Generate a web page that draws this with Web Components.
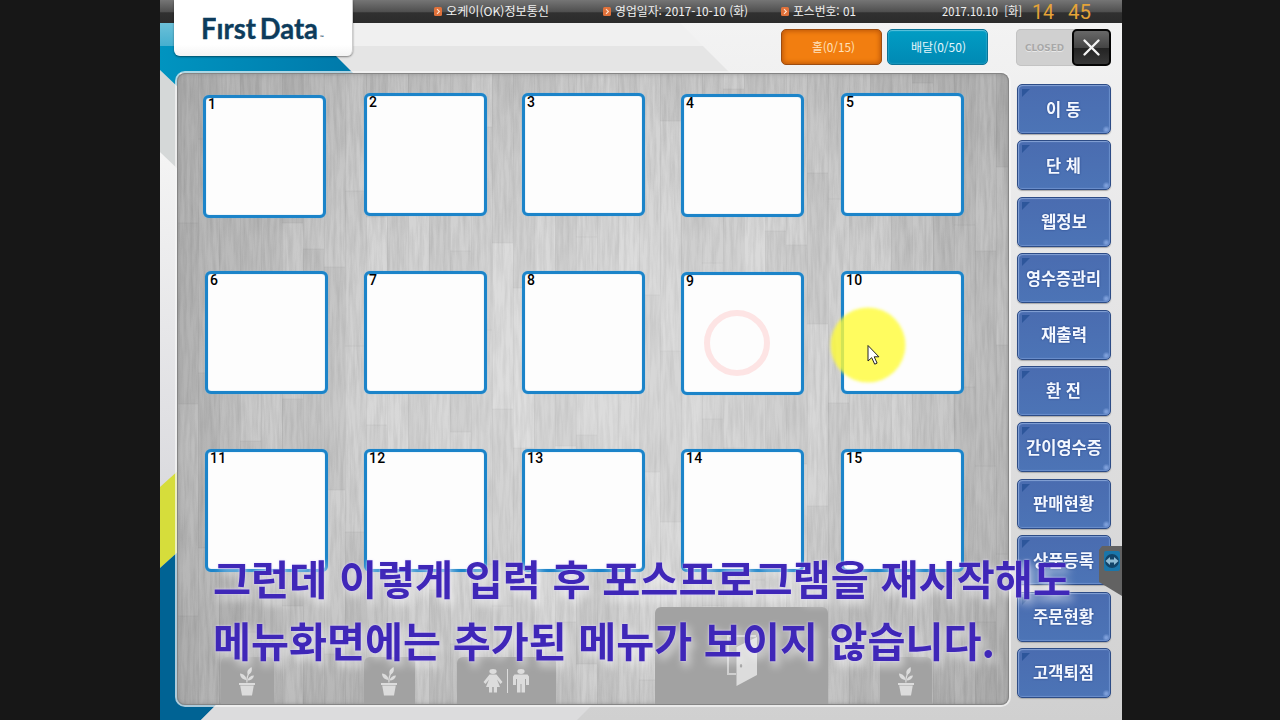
<!DOCTYPE html>
<html lang="ko">
<head>
<meta charset="UTF-8">
<title>POS</title>
<style>
  body {
    margin: 0;
    width: 1280px;
    height: 720px;
    overflow: hidden;
    background: #171717;
    font-family: "Noto Sans CJK KR", "Liberation Sans", sans-serif;
  }
</style>
</head>
<body>
<pos-app></pos-app>

<script>
  // shared helper: every component keeps its markup and styles in its own open root
  class BaseElement extends HTMLElement {
    connectedCallback() {
      if (this.shadowRoot) return;
      this.attachShadow({ mode: 'open' });
      this.shadowRoot.innerHTML = this.render();
    }
  }

  // one line of text, set to an exact width
  class FitText extends BaseElement {
    render() {
      const width = this.getAttribute('width');
      const size = Number(this.getAttribute('size'));
      return `
        <style>
          :host { display: block; flex: none; }
          svg { display: block; overflow: visible; }
          text { fill: currentColor; white-space: pre; }
        </style>
        <svg width="${width}" height="${size}">
          <text x="0" y="${size * 0.86}" font-size="${size}" textLength="${width}" lengthAdjust="spacingAndGlyphs">${this.getAttribute('text')}</text>
        </svg>
      `;
    }
  }

  class StatusItem extends BaseElement {
    render() {
      return `
        <style>
          :host { display: flex; align-items: center; gap: 4px; color: #f0f0f0; }
          svg { display: block; }
        </style>
        <svg width="8" height="9" viewBox="0 0 8 9">
          <rect width="8" height="9" rx="1.5" fill="#e0713a"/>
          <path d="M3 2.2 5.4 4.5 3 6.8" fill="none" stroke="#ffe3d0" stroke-width="1.1"/>
        </svg>
        <slot></slot>
      `;
    }
  }

  class BrandLogo extends BaseElement {
    render() {
      return `
        <style>
          :host {
            display: block;
            box-sizing: border-box;
            width: 179px;
            height: 56px;
            padding: 14px 0 0 27px;
            background: linear-gradient(#fff 80%, #f4f4f4);
            border-radius: 0 0 6px 6px;
            border-right: 1px solid #ccc;
            box-shadow: 0 1px 2px rgba(0,0,0,.45);
          }
          svg { display: block; overflow: visible; }
          text { font-family: Lato, sans-serif; font-weight: 700; fill: #0d3c5c; }
          .name { stroke: #0d3c5c; stroke-width: .4; word-spacing: -3px; }
        </style>
        <svg width="126" height="32">
          <text class="name" x="0" y="25" font-size="28.5" textLength="117" lengthAdjust="spacingAndGlyphs">First Data</text>
          <rect x="15.2" y="0" width="8.5" height="9.2" fill="#fff"/>
          <text x="119" y="25" font-size="5">™</text>
        </svg>
      `;
    }
  }

  class TopBar extends BaseElement {
    render() {
      return `
        <style>
          :host {
            display: flex;
            align-items: center;
            height: 23px;
            box-sizing: border-box;
            padding-left: 274px;
            background: linear-gradient(#757575, #505050 50%, #303030 56%, #2b2b2b);
          }
          .second { margin-left: 54px; }
          .third { margin-left: 33px; }
          .date { margin-left: 86px; color: #eee; }
          .clock { display: flex; gap: 14px; margin-left: 10px; padding-top: 1px; color: #e5a337; font-family: Roboto, sans-serif; }
        </style>
        <status-item><fit-text text="오케이(OK)정보통신" width="103" size="12"></fit-text></status-item>
        <status-item class="second"><fit-text text="영업일자: 2017-10-10 (화)" width="133" size="12"></fit-text></status-item>
        <status-item class="third"><fit-text text="포스번호: 01" width="63" size="12"></fit-text></status-item>
        <fit-text class="date" text="2017.10.10  [화]" width="80" size="12"></fit-text>
        <div class="clock">
          <fit-text text="14" width="22" size="20"></fit-text>
          <fit-text text="45" width="23" size="20"></fit-text>
        </div>
      `;
    }
  }

  class ModeButton extends BaseElement {
    render() {
      return `
        <style>
          :host {
            display: flex;
            align-items: center;
            justify-content: center;
            box-sizing: border-box;
            width: 101px;
            height: 36px;
            padding: 1px 0 0 1px;
            border-radius: 5px;
            color: #e4f6fb;
            border: 1px solid #0a7397;
            background: linear-gradient(#019dc4, #0089b4);
            box-shadow: inset 0 1px 1px #5cc3dc, inset 0 0 2px #4fb5d0;
          }
          :host([active]) {
            color: #ffe2bd;
            padding-left: 3px;
            border-color: #9d4c10;
            background: #f27e10;
            box-shadow: inset 0 0 5px 1px #bb5608;
          }
        </style>
        <slot></slot>
      `;
    }
  }

  class CloseSwitch extends BaseElement {
    render() {
      return `
        <style>
          :host {
            display: flex;
            align-items: center;
            box-sizing: border-box;
            width: 95px;
            height: 37px;
            border-radius: 5px;
            background: #d0d0d0;
            box-shadow: inset 0 0 0 1px #c3c3c3;
          }
          .label {
            padding-left: 9px;
            width: 47px;
            color: #a8a8a8;
            font-family: "DejaVu Sans", sans-serif;
            font-weight: bold;
            text-shadow: 0 1px #e8e8e8;
          }
          .x {
            box-sizing: border-box;
            width: 39px;
            height: 37px;
            flex: none;
            border: 2px solid #050505;
            border-radius: 5px;
            background: linear-gradient(#686868, #454545 50%, #232323 52%, #383838);
          }
        </style>
        <div class="label"><fit-text text="CLOSED" width="39" size="8"></fit-text></div>
        <svg class="x" viewBox="0 0 35 33">
          <path d="M10.5 9.5 24.5 23.5M24.5 9.5 10.5 23.5" stroke="#f3f3f3" stroke-width="2.4" stroke-linecap="round"/>
        </svg>
      `;
    }
  }

  class SideButton extends BaseElement {
    render() {
      return `
        <style>
          :host {
            display: flex;
            align-items: center;
            justify-content: center;
            box-sizing: border-box;
            width: 94px;
            height: 50px;
            padding-right: 1px;
            border: 1px solid #2d4c86;
            border-radius: 5px;
            background:
              radial-gradient(circle at 96% 93%, #7d9fda 0 1px, transparent 4px),
              linear-gradient(135deg, #2d569b 48%, transparent 52%) 4px 4px / 8px 8px no-repeat,
              linear-gradient(#4a6cb0, #4c74b6);
            box-shadow: inset 1px 1px 1px #86a3d6, inset -1px -1px 1px #6c8fcc, 0 1px 1px #aaa;
            color: #f4f8ff;
            font-weight: 700;
          }
          fit-text { filter: drop-shadow(0 0 1px #27468a); }
        </style>
        <fit-text text="${this.getAttribute('label')}" width="${this.getAttribute('text-width')}" size="17"></fit-text>
      `;
    }
  }

  class SideMenu extends BaseElement {
    render() {
      const items = [
        ['이 동', 35], ['단 체', 35], ['웹정보', 46], ['영수증관리', 75], ['재출력', 46], ['환 전', 35],
        ['간이영수증', 76], ['판매현황', 61], ['상품등록', 61], ['주문현황', 61], ['고객퇴점', 61],
      ];
      return `
        <style>
          :host { display: flex; flex-direction: column; justify-content: space-between; height: 614px; }
        </style>
        ${items.map(([label, w]) => `<side-button label="${label}" text-width="${w}"></side-button>`).join('')}
      `;
    }
  }

  class FloorTable extends BaseElement {
    render() {
      return `
        <style>
          :host {
            position: absolute;
            box-sizing: border-box;
            width: 123px;
            height: 123px;
            border: 3px solid #1c84c9;
            border-radius: 6px;
            background: #fdfdfd;
            color: #000;
            font: 500 14px/12px Roboto, sans-serif;
            letter-spacing: .3px;
            padding: 0 0 0 2px;
            box-shadow: 0 0 1px #67b4e4, inset 0 0 1px #67b4e4;
          }
        </style>
        <slot></slot>
      `;
    }
  }

  // grey furniture block standing on the bottom edge of the floor
  class FloorFixture extends BaseElement {
    render() {
      const icons = {
        plant: `<svg width="20" height="30" viewBox="0 0 20 30">
          <path d="M2 17h16v2H2zM3.2 19.5h13.6L15 29.5H5z"/>
          <path d="M9.3 16.5C9 12 10 9 12 6l.9.5C11 10 10.4 13 10.5 16.5z"/>
          <path d="M14.5 1C10.5 3.5 9.5 6 11 9 14.5 7.5 15.5 4.5 14.5 1zM3 7.5C3 11 5.5 13.7 9.5 14 9.3 10.5 7 8 3 7.5zM17 9.5C13.5 9.5 11.2 11.5 10.5 14.5 14 14.5 16.3 12.7 17 9.5z"/></svg>`,
        restroom: `<svg width="48" height="26" viewBox="0 0 48 26">
          <ellipse cx="11" cy="3.5" rx="3.6" ry="2.4"/>
          <path d="M7.5 6.5h7L20.5 14l-2 2L15 11.5l3 7.5h-3v5.500h-3.200V19h-1.600v5.500H7V19H4l3-7.500L3.500 16l-2-2z"/>
          <path d="M25 1h1v24h-1z"/>
          <ellipse cx="39" cy="3.5" rx="3.6" ry="2.4"/>
          <path d="M32.5 6.5h13l1.500 2V17h-3v-6h-1v13.500h-3.500V16h-1v8.500H35V11h-1v6h-3V8.500z"/></svg>`,
        door: `<svg width="32" height="54" viewBox="0 0 32 54">
          <path d="M10 40H2V2h28" fill="none" stroke="#cfcfcf" stroke-width="2"/>
          <path fill-rule="evenodd" d="M10.5 13 31 3v38L10.5 52zM15 30a1.2 1.8 0 1 0 .1 0z"/></svg>`,
      };
      return `
        <style>
          :host {
            position: absolute;
            bottom: 1px;
            display: flex;
            justify-content: center;
            align-items: center;
            box-sizing: border-box;
            background: #a2a2a2;
            border-radius: 6px 6px 0 0;
          }
          svg { fill: #dcdcdc; display: block; flex: none; }
        </style>
        ${icons[this.getAttribute('kind')]}
      `;
    }
  }

  class FloorPlan extends BaseElement {
    planks() {
      const tones = [208, 201, 212, 204, 215, 206, 210, 202, 213, 205, 216, 209];
      let out = '';
      let i = 0;
      for (let x = 0; x < 836; x += 21) {
        let y = -((i * 137) % 200);
        let j = 0;
        while (y < 640) {
          const base = tones[(i * 5 + j * 7) % 12] - 2;
          const h = 150 + ((i * 53 + j * 31) % 90);
          out += `<rect x="${x}" y="${y}" width="21" height="${h}" fill="rgb(${base},${base},${base})"/>`;
          out += `<path d="M${x} ${y}h21M${x + .5} ${y}v${h}" stroke="#999" stroke-opacity=".16"/>`;
          y += h;
          j++;
        }
        i++;
      }
      return out;
    }

    render() {
      // left / top on the floor, in table-number order
      const tables = [
        [26, 22], [187, 20], [345, 20], [504, 21], [664, 20],
        [28, 198], [187, 198], [345, 198], [504, 199], [664, 198],
        [28, 376], [187, 376], [345, 376], [504, 376], [664, 376],
      ];
      return `
        <style>
          :host {
            display: block;
            position: relative;
            box-sizing: border-box;
            width: 836px;
            height: 636px;
            border: 2px solid rgba(246,246,246,.7);
            border-radius: 10px;
          }
          .floor {
            position: relative;
            height: 632px;
            border-radius: 8px;
            overflow: hidden;
          }
          .wood { display: block; }
          .shade {
            position: absolute;
            inset: 0;
            border-radius: 8px;
            background: radial-gradient(ellipse 58% 75% at 52% 50%, rgba(255,255,255,.28), rgba(255,255,255,.04) 55%, rgba(0,0,0,.14) 100%);
            box-shadow: inset 0 0 0 1px #858585, inset 0 0 5px #888;
          }
        </style>
        <div class="floor">
          <svg class="wood" width="832" height="632">
            <filter id="grain" x="0" y="0" width="100%" height="100%" color-interpolation-filters="sRGB">
              <feTurbulence type="fractalNoise" baseFrequency="0.3 0.025" numOctaves="3" seed="6"/>
              <feColorMatrix values="0 0 0 0 .3  0 0 0 0 .3  0 0 0 0 .3  1.5 0 0 0 -.5"/>
            </filter>
            ${this.planks()}
            <rect width="832" height="632" filter="url(#grain)" opacity=".17"/>
          </svg>
          <div class="shade"></div>
          <floor-fixture kind="plant" style="left:44px;width:53px;height:47px;padding-right:1px"></floor-fixture>
          <floor-fixture kind="plant" style="left:187px;width:51px;height:47px;padding-right:1px"></floor-fixture>
          <floor-fixture kind="restroom" style="left:280px;width:99px;height:47px;padding-right:1px"></floor-fixture>
          <floor-fixture kind="door" style="left:478px;width:173px;height:97px;padding:11px 0 0 0"></floor-fixture>
          <floor-fixture kind="plant" style="left:703px;width:52px;height:47px;padding-right:1px"></floor-fixture>
          ${tables.map(([x, y], i) => `<floor-table style="left:${x}px;top:${y}px">${i + 1}</floor-table>`).join('')}
        </div>
      `;
    }
  }

  class AppBackdrop extends BaseElement {
    render() {
      return `
        <style>
          :host { display: block; position: absolute; inset: 0; }
          svg { display: block; }
        </style>
        <svg width="962" height="720">
          <defs>
            <linearGradient id="page" x1="0" y1="0" x2="0" y2="1">
              <stop offset="0" stop-color="#f4f4f4"/><stop offset=".5" stop-color="#e2e2e3"/><stop offset="1" stop-color="#d0d0d0"/>
            </linearGradient>
            <linearGradient id="sky" x1="0" y1="0" x2="0" y2="1">
              <stop offset="0" stop-color="#6cc0d8"/><stop offset="1" stop-color="#45afcf"/>
            </linearGradient>
            <linearGradient id="teal" x1="0" y1="0" x2="1" y2="0">
              <stop offset="0" stop-color="#0094c0"/><stop offset="1" stop-color="#0079aa"/>
            </linearGradient>
            <linearGradient id="left" x1="0" y1="0" x2="0" y2="1">
              <stop offset="0" stop-color="#f4f4f4"/><stop offset="1" stop-color="#dadade"/>
            </linearGradient>
          </defs>
          <rect width="962" height="720" fill="url(#page)"/>
          <path d="M0 23H520L543 46H0z" fill="#f0f0f0"/>
          <path d="M0 46H543L588 91H0z" fill="#e5e5e5"/>
          <path d="M0 152 20 171V500H0z" fill="url(#left)"/>
          <path d="M0 70 20 89V171L0 152z" fill="#d5d8d8"/>
          <path d="M0 23H143L166 46H0z" fill="url(#sky)"/>
          <path d="M0 46H166L193 73H20V89L0 70z" fill="url(#teal)"/>
          <path d="M0 487 20 469V550L0 568z" fill="#d6dd3b"/>
          <path d="M0 568 20 550V690L71 690 41 720H0z" fill="#006394"/>
          <path d="M71 690H447L417 720H41z" fill="#dcdcdd"/>
        </svg>
      `;
    }
  }

  class RemoteTab extends BaseElement {
    render() {
      return `
        <style>
          :host { display: block; }
          svg { display: block; }
        </style>
        <svg width="24" height="51" viewBox="0 0 24 51">
          <path d="M3 0h20v50L0 36V4z" fill="#626262"/>
          <rect x="5" y="5" width="16" height="20" rx="2" fill="#1a76aa"/>
          <circle cx="13" cy="15" r="7" fill="#124469"/>
          <path d="m6.5 15 4.500-4v2.500h4V11l4.500 4-4.500 4v-2.500h-4V19z" fill="#8fbdd6"/>
        </svg>
      `;
    }
  }

  // click ring, pointer highlight and arrow of the screen recorder
  class PointerTrail extends BaseElement {
    render() {
      return `
        <style>
          :host { display: block; position: absolute; inset: 0; pointer-events: none; }
        </style>
        <svg width="1280" height="720">
          <filter id="soft" x="-10%" y="-10%" width="120%" height="120%"><feGaussianBlur stdDeviation="1.5"/></filter>
          <circle cx="737" cy="343" r="30" fill="none" stroke="#ff9c9c" stroke-opacity=".25" stroke-width="6"/>
          <circle cx="868" cy="345" r="37.5" fill="#fffc38" fill-opacity=".8" filter="url(#soft)"/>
          <path d="M868 345.500v15.500l3.700-3.300 3 6.500 2.400-1.100-2.900-6.300h4.700z" fill="#fff" stroke="#222" stroke-width="1"/>
        </svg>
      `;
    }
  }

  class VideoCaption extends BaseElement {
    render() {
      return `
        <style>
          :host {
            position: absolute;
            left: 213px;
            top: 560px;
            display: flex;
            flex-direction: column;
            gap: 21px;
            color: #3f27b8;
            font-weight: 700;
          }
          fit-text {
            filter: drop-shadow(0 0 1px rgba(222,212,255,.95)) drop-shadow(3px 5px 4px rgba(255,255,255,.6));
          }
        </style>
        <fit-text text="그런데 이렇게 입력 후 포스프로그램을 재시작해도" width="858" size="41"></fit-text>
        <fit-text text="메뉴화면에는 추가된 메뉴가 보이지 않습니다." width="782" size="41"></fit-text>
      `;
    }
  }

  class PosApp extends BaseElement {
    render() {
      return `
        <style>
          :host { display: block; position: relative; width: 1280px; height: 720px; overflow: hidden; }
          .window { position: relative; width: 962px; height: 720px; margin: 0 auto 0 160px; }
          .content { position: relative; }
          .tools {
            display: flex;
            justify-content: flex-end;
            align-items: flex-start;
            box-sizing: border-box;
            height: 48px;
            padding: 6px 11px 0 0;
          }
          mode-button + mode-button { margin-left: 5px; }
          close-switch { margin-left: 28px; }
          .main { display: flex; align-items: flex-start; padding-left: 15px; }
          side-menu { margin: 13px 0 0 6px; }
          brand-logo { position: absolute; left: 14px; top: 0; }
          remote-tab { position: absolute; left: 939px; top: 546px; }
        </style>
        <div class="window">
          <app-backdrop></app-backdrop>
          <div class="content">
            <top-bar></top-bar>
            <div class="tools">
              <mode-button active><fit-text text="홀(0/15)" width="43" size="12"></fit-text></mode-button>
              <mode-button><fit-text text="배달(0/50)" width="55" size="12"></fit-text></mode-button>
              <close-switch></close-switch>
            </div>
            <div class="main">
              <floor-plan></floor-plan>
              <side-menu></side-menu>
            </div>
          </div>
          <brand-logo></brand-logo>
          <remote-tab></remote-tab>
        </div>
        <pointer-trail></pointer-trail>
        <video-caption></video-caption>
      `;
    }
  }

  customElements.define('fit-text', FitText);
  customElements.define('status-item', StatusItem);
  customElements.define('brand-logo', BrandLogo);
  customElements.define('top-bar', TopBar);
  customElements.define('mode-button', ModeButton);
  customElements.define('close-switch', CloseSwitch);
  customElements.define('side-button', SideButton);
  customElements.define('side-menu', SideMenu);
  customElements.define('floor-table', FloorTable);
  customElements.define('floor-fixture', FloorFixture);
  customElements.define('floor-plan', FloorPlan);
  customElements.define('app-backdrop', AppBackdrop);
  customElements.define('remote-tab', RemoteTab);
  customElements.define('pointer-trail', PointerTrail);
  customElements.define('video-caption', VideoCaption);
  customElements.define('pos-app', PosApp);
</script>
</body>
</html>
